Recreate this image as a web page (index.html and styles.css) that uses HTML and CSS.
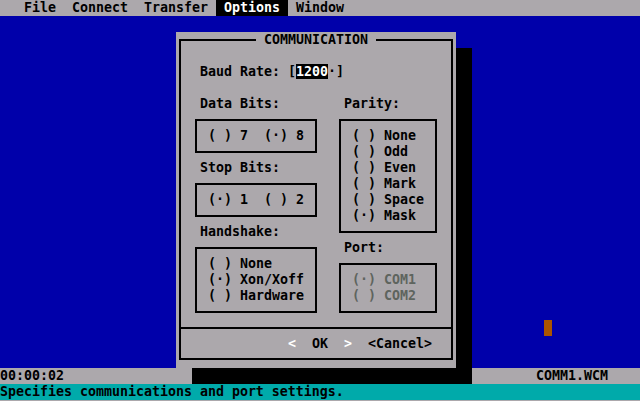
FILE: index.html
```html
<!DOCTYPE html>
<html lang="en">
<head>
<meta charset="utf-8">
<title>Communication Settings</title>
<link rel="stylesheet" href="styles.css">
</head>
<body>
<div class="screen">
  <div class="menubar">
    <span class="menu-item">File</span>
    <span class="menu-item">Connect</span>
    <span class="menu-item">Transfer</span>
    <span class="menu-item active">Options</span>
    <span class="menu-item">Window</span>
  </div>

  <div class="desktop">
    <div class="cursor"></div>

    <div class="dialog">
      <div class="frame"></div>
      <div class="title">COMMUNICATION</div>

      <div class="field baud">Baud Rate: [<span class="sel">1200</span>·]</div>

      <div class="field label-data">Data Bits:</div>
      <div class="field label-parity">Parity:</div>

      <div class="group box-data">
        <div class="line">( ) 7  (·) 8</div>
      </div>

      <div class="group box-parity">
        <div class="line">( ) None</div>
        <div class="line">( ) Odd</div>
        <div class="line">( ) Even</div>
        <div class="line">( ) Mark</div>
        <div class="line">( ) Space</div>
        <div class="line">(·) Mask</div>
      </div>

      <div class="field label-stop">Stop Bits:</div>
      <div class="group box-stop">
        <div class="line">(·) 1  ( ) 2</div>
      </div>

      <div class="field label-hand">Handshake:</div>
      <div class="group box-hand">
        <div class="line">( ) None</div>
        <div class="line">(·) Xon/Xoff</div>
        <div class="line">( ) Hardware</div>
      </div>

      <div class="field label-port">Port:</div>
      <div class="group box-port disabled">
        <div class="line">(·) COM1</div>
        <div class="line">( ) COM2</div>
      </div>

      <div class="separator"></div>

      <div class="field buttons"><span class="focus">&lt;</span>  OK  <span class="focus">&gt;</span>  &lt;Cancel&gt;</div>
    </div>
  </div>

  <div class="statusbar">
    <span>00:00:02</span>
    <span>COMM1.WCM</span>
  </div>
  <div class="hintbar">Specifies communications and port settings.</div>
</div>
</body>
</html>
```

FILE: styles.css
```css
/* Text-mode screen: 80 columns x 25 rows, 8x16 character cells */
html, body {
  margin: 0;
  padding: 0;
  background: #aca8ac;
}

.screen {
  width: 640px;
  font-family: "DejaVu Sans Mono", "Liberation Mono", monospace;
  font-weight: bold;
  font-size: 13.29px;
  line-height: 16px;
  color: #000;
  display: grid;
  grid-template-rows: 16px 352px 16px 16px;
}

/* Top menu bar */
.menubar {
  background: #aca8ac;
  padding-left: 16px;
  display: flex;
  white-space: pre;
}

.menu-item {
  padding: 0 8px;
}

.menu-item.active {
  background: #000;
  color: #fff;
}

/* Blue work area */
.desktop {
  background: #0000aa;
  position: relative;
}

.cursor {
  position: absolute;
  left: 544px;
  top: 304px;
  width: 8px;
  height: 16px;
  background: #aa5500;
}

/* Dialog window on a 35 x 21 cell grid */
.dialog {
  position: absolute;
  z-index: 1;
  left: 176px;
  top: 16px;
  width: 280px;
  height: 336px;
  background: #aca8ac;
  box-shadow: 16px 16px 0 #000;
  display: grid;
  grid-template-columns: repeat(35, 8px);
  grid-template-rows: repeat(21, 16px);
}

.frame {
  grid-column: 1 / -1;
  grid-row: 1 / -1;
  margin: 7px 3px 8px;
  border: 2px solid #000;
}

.title {
  grid-column: 11 / 26;
  grid-row: 1;
  background: #aca8ac;
  text-align: center;
}

.field {
  white-space: pre;
}

.sel {
  background: #000;
  color: #fff;
}

.baud         { grid-column: 4 / 30;  grid-row: 3; }
.label-data   { grid-column: 4 / 18;  grid-row: 5; }
.label-parity { grid-column: 22 / 34; grid-row: 5; }
.label-stop   { grid-column: 4 / 18;  grid-row: 9; }
.label-hand   { grid-column: 4 / 18;  grid-row: 13; }
.label-port   { grid-column: 22 / 34; grid-row: 14; }

/* Bordered option groups */
.group {
  margin: 7px 3px;
  border: 2px solid #000;
  padding: 7px 0 0 11px;
}

.line {
  white-space: pre;
  height: 16px;
}

.box-data   { grid-column: 3 / 19;  grid-row: 6 / 9; }
.box-parity { grid-column: 21 / 34; grid-row: 6 / 14; }
.box-stop   { grid-column: 3 / 19;  grid-row: 10 / 13; }
.box-hand   { grid-column: 3 / 19;  grid-row: 14 / 19; }
.box-port   { grid-column: 21 / 34; grid-row: 15 / 19; }

.disabled {
  color: #5e645e;
}

.separator {
  grid-column: 1 / -1;
  grid-row: 19;
  align-self: start;
  margin: 7px 3px 0;
  height: 2px;
  background: #000;
}

.buttons {
  grid-column: 15 / 34;
  grid-row: 20;
}

.focus {
  color: #fff;
}

/* Bottom bars */
.statusbar {
  background: #aca8ac;
  display: flex;
  justify-content: space-between;
  padding-right: 32px;
  white-space: pre;
}

.hintbar {
  background: #00aaaa;
  white-space: pre;
}
```
